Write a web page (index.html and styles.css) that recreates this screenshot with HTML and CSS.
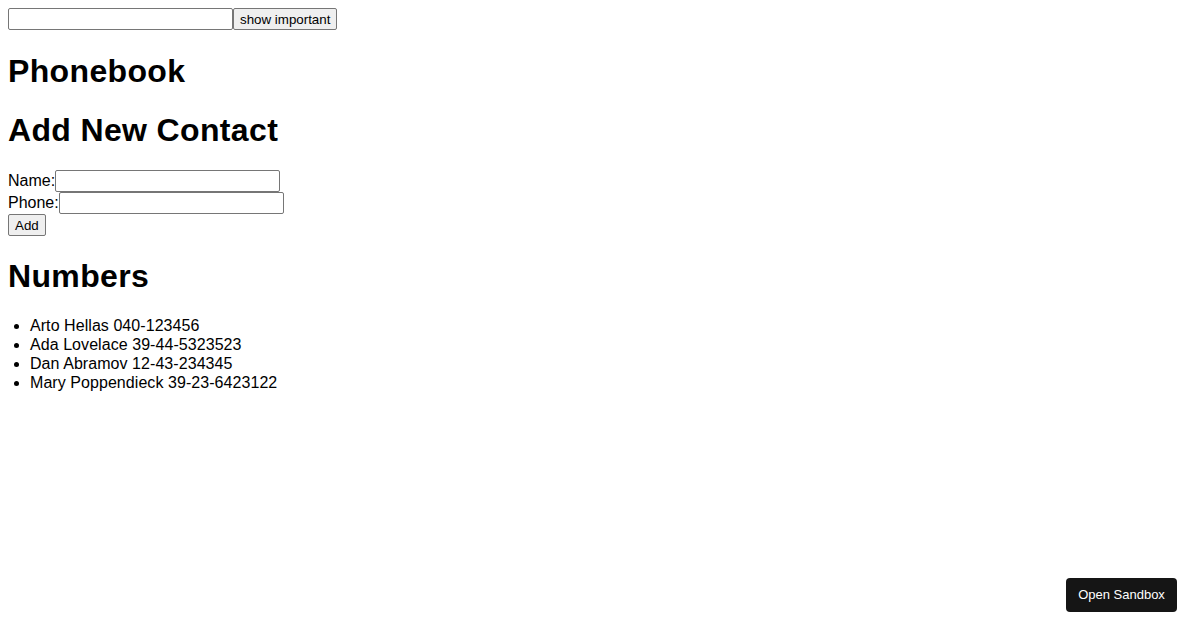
FILE: index.html
```html
<!DOCTYPE html>
<html>
<head>
<meta charset="utf-8">
<link rel="stylesheet" href="styles.css">
</head>
<body>
<div class="filter"><input class="field" type="text"><button class="btn">show important</button></div>
<h1 class="title">Phonebook</h1>
<h2 class="title">Add New Contact</h2>
<form class="form">
  <div class="row">Name:<input class="field" type="text"></div>
  <div class="row">Phone:<input class="field" type="text"></div>
  <div class="row"><button class="btn" type="button">Add</button></div>
</form>
<h2 class="title">Numbers</h2>
<ul class="list">
  <li>Arto Hellas 040-123456</li>
  <li>Ada Lovelace 39-44-5323523</li>
  <li>Dan Abramov 12-43-234345</li>
  <li>Mary Poppendieck 39-23-6423122</li>
</ul>
<button class="sandbox" type="button">Open Sandbox</button>
</body>
</html>
```
FILE: styles.css
```css
html, body {
  background: #fff;
}
body {
  margin: 8px;
  font-family: "Liberation Sans", Arial, sans-serif;
  font-size: 16px;
  color: #000;
}
.filter {
  display: flex;
  align-items: flex-start;
  height: 24px;
}
.field {
  box-sizing: border-box;
  width: 225px;
  height: 22px;
  margin: 0;
  padding: 1px 2px;
  border: 1px solid #767676;
  border-radius: 2px;
  font-family: "Liberation Sans", Arial, sans-serif;
  font-size: 13.33px;
  background: #fff;
}
.btn {
  box-sizing: border-box;
  height: 22px;
  margin: 0;
  padding: 1px 6px;
  border: 1px solid #767676;
  border-radius: 2px;
  background: #efefef;
  font-family: "Liberation Sans", Arial, sans-serif;
  font-size: 13.33px;
  color: #000;
}
.title {
  font-size: 32px;
  font-weight: bold;
  letter-spacing: 0.35px;
  margin: 21.44px 0;
}
.form {
  margin: 0;
}
.row {
  display: flex;
  align-items: center;
  height: 22px;
}
.list {
  margin: 19px 0 16px;
  padding-left: 22px;
  line-height: 19px;
  letter-spacing: 0.06px;
}
.sandbox {
  position: fixed;
  right: 23px;
  bottom: 18px;
  width: 111px;
  height: 34px;
  border: none;
  border-radius: 4px;
  background: #151515;
  color: #fff;
  font-family: "Liberation Sans", Arial, sans-serif;
  font-size: 13px;
  padding: 0 0 2px;
}
```
